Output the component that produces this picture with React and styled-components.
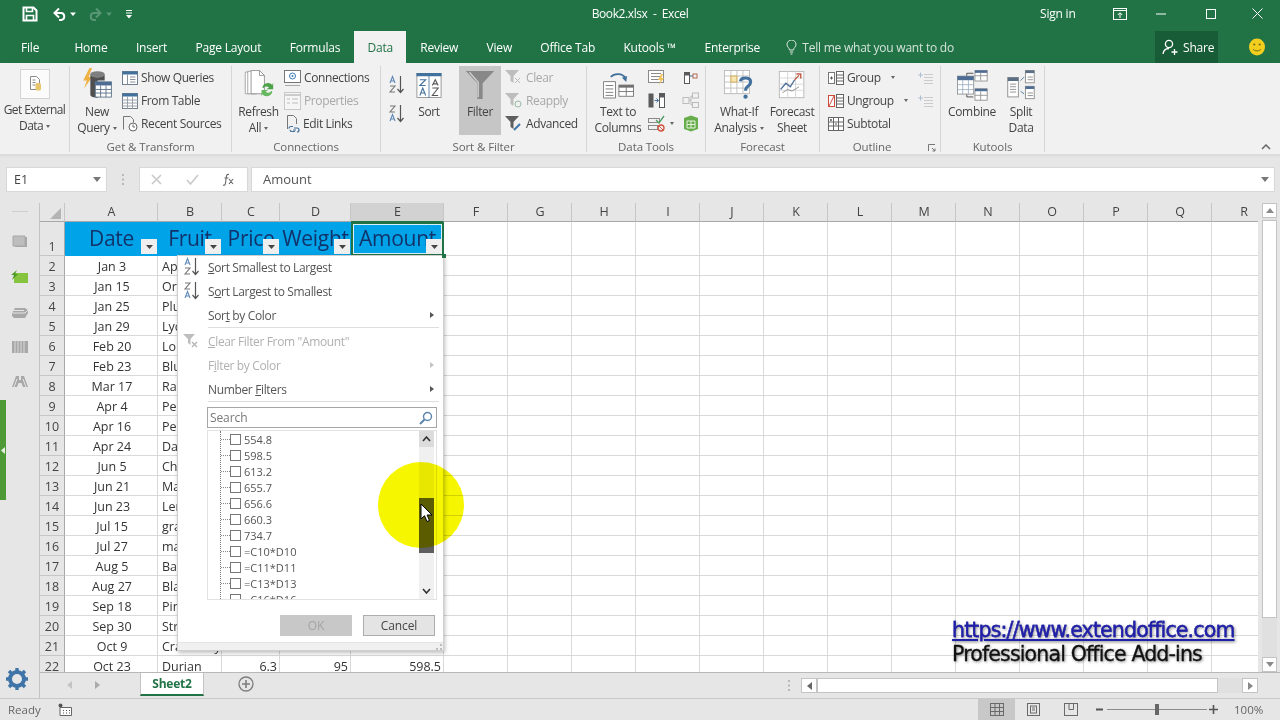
import React from 'react';
import styled, { createGlobalStyle } from 'styled-components';

const UI = `"Open Sans", "Noto Sans", sans-serif`;

const Global = createGlobalStyle`
  html, body { margin: 0; padding: 0; background: #e6e6e6; }
  * { box-sizing: border-box; }
`;

const Page = styled.div`
  width: 1280px;
  height: 720px;
  overflow: hidden;
  display: flex;
  flex-direction: column;
  font-family: ${UI};
  font-size: 12px;
  color: #444;
  background: #e6e6e6;
`;

/* title bar */
const TitleBar = styled.div`
  height: 31px;
  flex: none;
  background: #217346;
  color: #fff;
  display: flex;
  align-items: center;
  padding: 0 0 4px 22px;
`;
const Qat = styled.div`
  width: 560px;
  display: flex;
  align-items: center;
`;
const QatGap = styled.span`
  width: ${p => p.$w}px;
  flex: none;
`;
const DocName = styled.div`
  width: 138px;
  margin-left: -11px;
  text-align: center;
  letter-spacing: -0.4px;
  white-space: pre;
`;
const WinCtl = styled.div`
  margin-left: auto;
  display: flex;
  align-items: center;
`;
const SignIn = styled.span`
  width: 66px;
  letter-spacing: -0.2px;
`;
const WinBtn = styled.span`
  width: ${p => p.$w || 46}px;
  display: flex;
  justify-content: center;
`;

/* tabs */
const TabBar = styled.div`
  height: 32px;
  flex: none;
  background: #217346;
  display: flex;
  align-items: stretch;
  padding-left: 7px;
`;
const Tab = styled.div`
  padding: 0 ${p => p.$pad ?? 14.2}px;
  margin-right: ${p => p.$mr || 0}px;
  display: flex;
  align-items: center;
  letter-spacing: -0.2px;
  color: ${p => (p.$on ? '#217346' : '#fff')};
  background: ${p => (p.$on ? '#f1f1f1' : 'transparent')};
`;
const TellMe = styled.div`
  margin-left: 12px;
  display: flex;
  align-items: center;
  gap: 5px;
  color: #d4e4da;
  letter-spacing: -0.23px;
`;
const Share = styled.div`
  margin-left: auto;
  width: 63px;
  height: 32px;
  background: #185c37;
  color: #fff;
  display: flex;
  align-items: center;
  gap: 4px;
  padding-left: 7px;
  letter-spacing: -0.2px;
`;
const Smile = styled.div`
  width: 62px;
  padding-right: 15px;
  display: flex;
  align-items: center;
  justify-content: flex-end;
`;

/* ribbon */
const Ribbon = styled.div`
  height: 92px;
  flex: none;
  background: #f1f1f1;
  border-bottom: 1px solid #dcdcdc;
  box-shadow: 0 1px 2px rgba(0, 0, 0, 0.06);
  display: flex;
  padding-top: 3px;
  position: relative;
`;
const Group = styled.div`
  width: ${p => p.$w}px;
  height: 86px;
  flex: none;
  border-right: 1px solid #d6d6d6;
  display: flex;
  flex-direction: column;
`;
const GroupBody = styled.div`
  height: 73px;
  display: flex;
  padding-left: ${p => p.$pad || 0}px;
`;
const Caption = styled.div`
  height: 13px;
  line-height: 16px;
  text-align: center;
  color: #666;
  font-size: 11.5px;
  letter-spacing: -0.1px;
  position: relative;
  padding-right: ${p => p.$pr || 0}px;
`;
const Launcher = styled.span`
  position: absolute;
  right: 4px;
  top: 5px;
  display: flex;
`;
const Large = styled.div`
  width: ${p => p.$w}px;
  margin-left: ${p => p.$ml || 0}px;
  height: ${p => p.$h || 72}px;
  flex: none;
  display: flex;
  flex-direction: column;
  align-items: center;
  text-align: center;
  line-height: 16px;
  letter-spacing: ${p => p.$ls ?? -0.35}px;
  white-space: nowrap;
  background: ${p => (p.$on ? '#c6c6c6' : 'transparent')};
`;
const LargeIcon = styled.div`
  height: ${p => p.$h || 38}px;
  flex: none;
  display: flex;
  align-items: center;
  justify-content: center;
`;
const Stack = styled.div`
  margin-left: ${p => p.$ml || 0}px;
  width: ${p => p.$w || 'auto'};
  flex: none;
  display: flex;
  flex-direction: column;
`;
const SortStack = styled.div`
  width: 18px;
  flex: none;
  padding-top: 9px;
  display: flex;
  flex-direction: column;
  gap: 9px;
`;
const SmallBtn = styled.div`
  height: 23px;
  display: flex;
  align-items: center;
  gap: 3px;
  white-space: nowrap;
  letter-spacing: -0.38px;
  color: ${p => (p.$off ? '#a8a8a8' : '#444')};
`;
const Caret = styled.span`
  display: inline-block;
  width: 0;
  height: 0;
  margin-left: ${p => p.$ml ?? 3}px;
  vertical-align: middle;
  border-left: 2.5px solid transparent;
  border-right: 2.5px solid transparent;
  border-top: 3px solid #666;
`;
const Collapse = styled.span`
  position: absolute;
  right: 9px;
  bottom: 4px;
  display: flex;
`;

/* formula bar */
const FormulaRow = styled.div`
  height: 48px;
  flex: none;
  display: flex;
  align-items: flex-start;
  padding: 12px 5px 0 6px;
`;
const NameBox = styled.div`
  width: 101px;
  height: 25px;
  background: #fff;
  border: 1px solid #d8d8d8;
  display: flex;
  align-items: center;
  justify-content: space-between;
  padding: 0 5px 0 7px;
  font-size: 12.5px;
`;
const Dots = styled.div`
  width: 32px;
  height: 25px;
  display: flex;
  align-items: center;
  justify-content: center;
`;
const FxButtons = styled.div`
  width: 109px;
  height: 25px;
  background: #fff;
  border: 1px solid #d8d8d8;
  display: flex;
  align-items: center;
  justify-content: space-between;
  padding: 0 12px 0 11px;
`;
const FormulaInput = styled.div`
  flex: 1;
  margin-left: 3px;
  height: 25px;
  background: #fff;
  border: 1px solid #d8d8d8;
  display: flex;
  align-items: center;
  justify-content: space-between;
  padding: 0 5px 1px 11px;
  font-size: 13px;
  color: #555;
`;

/* main area */
const Main = styled.div`
  height: 495px;
  flex: none;
  display: flex;
  position: relative;
`;
const SidePane = styled.div`
  width: 40px;
  flex: none;
  border-right: 1px solid #c4c4c4;
  display: flex;
  flex-direction: column;
  align-items: center;
  padding-top: 8px;
  position: relative;
`;
const SideDash = styled.div`
  width: 16px;
  height: 1px;
  background: #cfcfcf;
  margin-bottom: 12px;
`;
const SideIcon = styled.div`
  height: 35px;
  display: flex;
  align-items: center;
`;
const GreenTab = styled.div`
  position: absolute;
  left: 0;
  top: 197px;
  width: 6px;
  height: 100px;
  background: #4e9a36;
  display: flex;
  align-items: center;
  justify-content: center;
`;
const Gear = styled.div`
  margin-top: auto;
  margin-bottom: 8px;
  margin-right: 5px;
  display: flex;
`;
const SheetArea = styled.div`
  flex: 1;
  display: flex;
  flex-direction: column;
  min-width: 0;
`;
const SheetTop = styled.div`
  height: 469px;
  flex: none;
  display: flex;
`;
const Grid = styled.div`
  width: 1218px;
  flex: none;
  overflow: hidden;
  background: #fff;
`;
const HeadRow = styled.div`
  display: flex;
  height: 19px;
  background: #e6e6e6;
`;
const Corner = styled.div`
  width: 25px;
  flex: none;
  display: flex;
  align-items: flex-end;
  justify-content: flex-end;
  padding: 0 3px 2px 0;
  border-right: 1px solid #c6c6c6;
  border-bottom: 1px solid #a8a8a8;
`;
const ColHead = styled.div`
  width: ${p => p.$w}px;
  flex: none;
  padding-left: 1px;
  text-align: center;
  line-height: 18px;
  font-size: 12.5px;
  color: #444;
  background: ${p => (p.$on ? '#d2d2d2' : 'transparent')};
  border-right: 1px solid #c6c6c6;
  border-bottom: 1px solid ${p => (p.$on ? '#217346' : '#a8a8a8')};
`;
const Row = styled.div`
  display: flex;
  height: ${p => p.$h || 20}px;
`;
const RowHead = styled.div`
  width: 25px;
  flex: none;
  display: flex;
  align-items: ${p => (p.$end ? 'flex-end' : 'center')};
  justify-content: center;
  padding-top: 2px;
  font-size: 12.5px;
  color: #444;
  background: #e6e6e6;
  border-right: 1px solid #a8a8a8;
  border-bottom: 1px solid #c6c6c6;
`;
const Cell = styled.div`
  width: ${p => p.$w}px;
  flex: none;
  padding: 0 2px 0 4px;
  line-height: 21px;
  font-size: 12.5px;
  color: #333;
  white-space: nowrap;
  overflow: hidden;
  text-align: ${p => p.$align || 'left'};
  border-right: 1px solid #d9d9d9;
  border-bottom: 1px solid #d9d9d9;
`;
const TitleCell = styled.div`
  width: ${p => p.$w}px;
  flex: none;
  position: relative;
  overflow: hidden;
  background: #00a2e8;
  color: #12336a;
  font-size: 21px;
  letter-spacing: -0.3px;
  line-height: ${p => (p.$on ? 28 : 32)}px;
  text-align: center;
  white-space: nowrap;
  border: ${p => (p.$on ? '2px solid #217346' : 'none')};
  box-shadow: ${p => (p.$on ? 'inset 0 0 0 1px #d8f0fa' : 'none')};
`;
const FilterBtn = styled.span`
  position: absolute;
  right: ${p => (p.$on ? 0 : 1)}px;
  bottom: ${p => (p.$on ? 0 : 2)}px;
  width: 16px;
  height: 15px;
  background: #efefef;
  display: flex;
  align-items: center;
  justify-content: center;
`;
const FillHandle = styled.span`
  position: absolute;
  left: 442px;
  top: 51px;
  width: 4px;
  height: 4px;
  background: #217346;
  z-index: 3;
`;

/* vertical scrollbar */
const VBar = styled.div`
  width: 15px;
  margin-left: 4px;
  flex: none;
  display: flex;
  flex-direction: column;
  background: #e0e0e0;
`;
const VArrow = styled.div`
  height: 15px;
  flex: none;
  background: #fff;
  border: 1px solid #c4c4c4;
  display: flex;
  align-items: center;
  justify-content: center;
`;
const VThumb = styled.div`
  height: 398px;
  flex: none;
  margin-top: 2px;
  background: #fff;
  border: 1px solid #c4c4c4;
`;
const VFill = styled.div`
  flex: 1;
`;

/* sheet tabs */
const TabsRow = styled.div`
  height: 26px;
  flex: none;
  display: flex;
  align-items: flex-start;
  border-top: 1px solid #b8b8b8;
  background: #e6e6e6;
  position: relative;
  z-index: 2;
`;
const SheetNav = styled.div`
  width: 100px;
  height: 24px;
  display: flex;
  align-items: center;
  padding-left: 27px;
  gap: 23px;
`;
const SheetTab = styled.div`
  width: 64px;
  height: 23px;
  background: #fff;
  border-bottom: 2px solid #217346;
  border-left: 1px solid #c4c4c4;
  border-right: 1px solid #c4c4c4;
  color: #217346;
  font-weight: 700;
  text-align: center;
  line-height: 22px;
  letter-spacing: -0.2px;
`;
const AddSheet = styled.div`
  margin-left: 34px;
  margin-top: 3px;
  display: flex;
`;
const TabGrip = styled.div`
  margin-left: auto;
  margin-right: 10px;
  margin-top: 7px;
  display: flex;
`;
const HBar = styled.div`
  width: 457px;
  height: 15px;
  margin-top: 5px;
  margin-right: 22px;
  flex: none;
  display: flex;
  background: #e0e0e0;
`;
const HArrow = styled.div`
  width: 16px;
  flex: none;
  background: #fff;
  border: 1px solid #c4c4c4;
  display: flex;
  align-items: center;
  justify-content: center;
  margin-left: ${p => (p.$end ? 'auto' : 0)};
`;
const HThumb = styled.div`
  width: 401px;
  background: #fff;
  border: 1px solid #c4c4c4;
`;

/* status bar */
const StatusBar = styled.div`
  height: 22px;
  flex: none;
  display: flex;
  align-items: center;
  border-top: 1px solid #c8c8c8;
  padding-left: 8px;
  color: #666;
  font-size: 11.5px;
`;
const MacroIcon = styled.span`
  margin-left: 17px;
  display: flex;
`;
const ViewGroup = styled.div`
  margin-left: auto;
  display: flex;
  align-items: center;
`;
const ViewBtn = styled.div`
  width: 37px;
  height: 21px;
  display: flex;
  align-items: center;
  justify-content: center;
  background: ${p => (p.$on ? '#c8c8c8' : 'transparent')};
`;
const Zoom = styled.div`
  display: flex;
  align-items: center;
  margin: 0 16px 0 7px;
`;
const ZoomTrack = styled.div`
  width: 100px;
  height: 1px;
  background: #8c8c8c;
  margin: 0 2px 0 4px;
  position: relative;
`;
const ZoomThumb = styled.span`
  position: absolute;
  left: 48px;
  top: -5px;
  width: 4px;
  height: 11px;
  background: #666;
`;
const ZoomValue = styled.div`
  width: 46px;
`;

/* filter dropdown */
const Dropdown = styled.div`
  position: absolute;
  left: 177px;
  top: 52px;
  width: 267px;
  height: 396px;
  z-index: 1;
  background: #fff;
  border: 1px solid #cfcfcf;
  box-shadow: 1px 2px 4px rgba(0, 0, 0, 0.25);
  display: flex;
  flex-direction: column;
`;
const MenuItem = styled.div`
  height: 24px;
  flex: none;
  display: flex;
  align-items: center;
  color: ${p => (p.$off ? '#b0b0b0' : '#555')};
  letter-spacing: -0.35px;
  padding-right: 9px;
  margin-top: ${p => p.$mt || 0}px;
`;
const MenuIcon = styled.span`
  width: 30px;
  flex: none;
  display: flex;
  justify-content: flex-start;
  padding-left: 5px;
`;
const MenuArrow = styled.span`
  margin-left: auto;
  width: 0;
  height: 0;
  border-top: 3.5px solid transparent;
  border-bottom: 3.5px solid transparent;
  border-left: 4px solid ${p => (p.$off ? '#c4c4c4' : '#555')};
`;
const MenuRule = styled.div`
  height: 1px;
  flex: none;
  margin: 0 4px 0 30px;
  background: #dedede;
`;
const SearchBox = styled.div`
  height: 21px;
  flex: none;
  margin: 5px 6px 0 29px;
  border: 1px solid #a6a6a6;
  display: flex;
  align-items: center;
  justify-content: space-between;
  padding: 0 3px 0 2px;
  color: #777;
  letter-spacing: -0.1px;
`;
const ListBox = styled.div`
  height: 170px;
  flex: none;
  margin: 2px 6px 0 29px;
  border: 1px solid #e2e2e2;
  display: flex;
  position: relative;
  overflow: hidden;
`;
const ListItems = styled.div`
  flex: 1;
  padding-left: 13px;
  position: relative;
`;
const TreeLine = styled.span`
  position: absolute;
  left: 12px;
  top: 0;
  bottom: 0;
  border-left: 1px dotted #777;
`;
const ListItem = styled.div`
  height: 16px;
  display: flex;
  align-items: center;
  font-size: 11px;
  color: #555;
  white-space: nowrap;
  &::before {
    content: '';
    width: 9px;
    border-top: 1px dotted #888;
    flex: none;
  }
`;
const Check = styled.span`
  width: 11px;
  height: 11px;
  flex: none;
  background: #fff;
  border: 1px solid #777;
  margin-right: 3px;
`;
const ListScroll = styled.div`
  width: 15px;
  margin-right: 2px;
  flex: none;
  background: #f0f0f0;
  display: flex;
  flex-direction: column;
  position: relative;
`;
const ListArrow = styled.div`
  height: 16px;
  flex: none;
  display: flex;
  align-items: center;
  justify-content: center;
  background: ${p => (p.$on ? '#dcdcdc' : 'transparent')};
  margin-top: ${p => (p.$end ? 'auto' : 0)};
`;
const ListThumb = styled.div`
  position: absolute;
  left: 0;
  top: 67px;
  width: 15px;
  height: 55px;
  background: #5e5e5e;
`;
const Buttons = styled.div`
  display: flex;
  justify-content: flex-end;
  gap: 11px;
  margin: 15px 8px 0 0;
`;
const DlgBtn = styled.div`
  width: 72px;
  height: 21px;
  text-align: center;
  line-height: 20px;
  letter-spacing: -0.1px;
  border: 1px solid ${p => (p.$off ? '#c8c8c8' : '#adadad')};
  background: ${p => (p.$off ? '#c8c8c8' : '#e4e4e4')};
  color: ${p => (p.$off ? '#a4a4a4' : '#444')};
`;
const GripBar = styled.div`
  margin-top: auto;
  height: 8px;
  background: #f0f0f0;
  border-top: 1px solid #e4e4e4;
  display: flex;
  justify-content: flex-end;
`;
const Spot = styled.div`
  position: absolute;
  left: 378px;
  top: 259px;
  width: 86px;
  height: 86px;
  border-radius: 50%;
  background: #f6f600;
  mix-blend-mode: multiply;
  z-index: 4;
`;
const Pointer = styled.span`
  position: absolute;
  left: 420px;
  top: 300px;
  z-index: 5;
  display: flex;
`;
const Watermark = styled.div`
  position: absolute;
  left: 952px;
  top: 415px;
  z-index: 3;
  font-family: "DejaVu Sans", sans-serif;
  font-size: 20.5px;
  line-height: 24px;
  letter-spacing: -0.85px;
  white-space: nowrap;
  color: #111;
  -webkit-text-stroke: 0.3px currentColor;
  text-shadow: 1px 1px 3px rgba(0, 0, 0, 0.55);
`;
const WatermarkLink = styled.div`
  color: #1f1fa8;
  text-decoration: underline;
`;

/* icons */
const Svg = ({ w, h = w, vb, children }) => (
  <svg width={w} height={h} viewBox={vb || `0 0 ${w} ${h}`} fill="none" style={{ display: 'block', flex: 'none' }}>
    {children}
  </svg>
);

const SaveIcon = () => (
  <Svg w={16}>
    <path d="M1.500 1.500h10l3 3v10h-13z" stroke="#fff" strokeWidth="2" />
    <path d="M4.500 1.500v4h6v-4M4.500 14.500v-5h7v5" stroke="#fff" strokeWidth="1.600" />
  </Svg>
);
const UndoIcon = () => (
  <Svg w={16}>
    <g stroke="#fff" strokeWidth="2">
      <path d="M3 7h6.500a3.600 3.600 0 0 1 0 7H7" />
      <path d="M7 2.500 2.500 7 7 11.500" />
    </g>
  </Svg>
);
const RedoIcon = () => (
  <Svg w={16}>
    <g stroke="#fff" strokeWidth="2" opacity=".25">
      <path d="M13 7H6.500a3.600 3.600 0 0 0 0 7H9" />
      <path d="M9 2.500 13.500 7 9 11.500" />
    </g>
  </Svg>
);
const TinyDown = ({ o = 1 }) => (
  <Svg w={6} h={4}>
    <path d="M0 .5h6L3 4z" fill="#fff" opacity={o} />
  </Svg>
);
const QatMore = () => (
  <Svg w={8} h={10}>
    <path d="M1 1.500h6M1 4h6" stroke="#fff" />
    <path d="M1 6h6L4 9.500z" fill="#fff" />
  </Svg>
);
const RibbonOpts = () => (
  <Svg w={14} h={12}>
    <rect x=".5" y=".5" width="13" height="11" stroke="#fff" />
    <path d="M.5 2.500h13M7 10V5M4.800 7 7 4.700 9.200 7" stroke="#fff" />
  </Svg>
);
const MinIcon = () => (
  <Svg w={10} h={2}>
    <path d="M0 1h10" stroke="#fff" />
  </Svg>
);
const MaxIcon = () => (
  <Svg w={10}>
    <rect x=".5" y=".5" width="9" height="9" stroke="#fff" />
  </Svg>
);
const CloseIcon = () => (
  <Svg w={11}>
    <path d="M.5.5l10 10M10.500.5l-10 10" stroke="#fff" />
  </Svg>
);
const Bulb = () => (
  <Svg w={11} h={15}>
    <path d="M3.500 10c0-2-2.500-3-2.500-5.500a4.500 4.500 0 0 1 9 0C10 7 7.500 8 7.500 10zM3.800 12h3.400M4.500 14h2" stroke="#dfeae3" />
  </Svg>
);
const ShareIcon = () => (
  <Svg w={17}>
    <circle cx="7" cy="5" r="3.600" stroke="#fff" strokeWidth="1.300" />
    <path d="M1 15c.5-4 3-5.500 6-5.500M12.500 10v6M9.500 13h6" stroke="#fff" strokeWidth="1.300" />
  </Svg>
);
const SmileIcon = () => (
  <Svg w={16} h={18}>
    <ellipse cx="8" cy="9" rx="8" ry="8.500" fill="#f2cf1e" />
    <circle cx="5.300" cy="6.500" r="1.100" fill="#7a6a10" />
    <circle cx="10.700" cy="6.500" r="1.100" fill="#7a6a10" />
    <path d="M4 11c1.500 2.500 6.500 2.500 8 0" stroke="#7a6a10" />
  </Svg>
);

const ExternalIcon = () => (
  <Svg w={30} h={30}>
    <rect x=".5" y=".5" width="29" height="29" fill="#fbfbfb" stroke="#d4d4d4" />
    <path d="M10.500 7.500h6l3 3v10h-9z" stroke="#8a8a8a" fill="#fff" />
    <path d="M12.500 11h3M12.500 13.500h3M12.500 16h3" stroke="#8a8a8a" />
    <rect x="15.500" y="14" width="5.500" height="7.500" rx="1.500" fill="#e8c670" />
  </Svg>
);
const QueryIcon = () => (
  <Svg w={31} h={34} vb="0 0 34 38">
    <path d="M8 0 1 14h4l-3 9 9-13H7l4-10z" fill="#efb144" />
    <ellipse cx="17" cy="7" rx="8" ry="3.500" fill="#7f7f7f" />
    <path d="M9 7v23c0 2 4 3.500 8 3.500V14h8V7c0 2-4 3.500-8 3.500S9 9 9 7z" fill="#505050" />
    <rect x="14.500" y="15.500" width="18" height="17" fill="#fff" stroke="#5a6f86" />
    <path d="M14.500 15.500h18v4h-18z" fill="#4d6c93" />
    <path d="M14.500 24h18M14.500 28h18M20.500 19.500v13M26.500 19.500v13" stroke="#5a6f86" />
  </Svg>
);
const ShowQueriesIcon = () => (
  <Svg w={16}>
    <rect x=".5" y="1.500" width="15" height="13" fill="#fff" stroke="#6f7f90" />
    <path d="M.5 1.500h15v3H.5z" fill="#41719c" />
    <path d="M5.500 4.500v10M8 7h5.500M8 9.500h5.500M8 12h5.500" stroke="#8a9099" />
  </Svg>
);
const FromTableIcon = () => (
  <Svg w={16} h={17}>
    <rect x=".5" y="1.500" width="15" height="15" fill="#fff" stroke="#75808c" />
    <path d="M.5 1.500h15v3H.5z" fill="#41719c" />
    <path d="M5.500 4.500v12M10.500 4.500v12M.5 8h15M.5 11h15M.5 14h15" stroke="#9aa2aa" />
  </Svg>
);
const RecentIcon = () => (
  <Svg w={16} h={17}>
    <path d="M1.500 14.500V1.500h7l3 3v3" stroke="#777" />
    <circle cx="11" cy="12" r="4" fill="#fff" stroke="#666" />
    <path d="M11 9.500V12h2" stroke="#666" />
  </Svg>
);
const RefreshIcon = () => (
  <Svg w={30} h={30} vb="0 0 36 36">
    <path d="M1.500 2.500h12v26h-12z" fill="#fff" stroke="#999" />
    <path d="M4.500 1.500h11v27h-11z" fill="#fff" stroke="#999" />
    <path d="M8.500.5h10l6 6v22h-16z" fill="#fff" stroke="#888" />
    <path d="M18.500.5v6h6" stroke="#888" />
    <path d="M22 21a7 7 0 0 1 12-3l1-3v8h-8l3-2a4.500 4.500 0 0 0-7 1z" fill="#4ea24a" />
    <path d="M34 26a7 7 0 0 1-12 3l-1 3v-8h8l-3 2a4.500 4.500 0 0 0 7-1z" fill="#66b85f" />
  </Svg>
);
const ConnIcon = () => (
  <Svg w={17} h={16}>
    <rect x=".5" y=".5" width="16" height="12" fill="#fff" stroke="#777" />
    <circle cx="8.500" cy="6" r="3" stroke="#3d7ab5" />
    <circle cx="8.500" cy="6" r="1" fill="#3d7ab5" />
    <path d="M1 15.500h15" stroke="#aaa" />
  </Svg>
);
const PropsIcon = () => (
  <Svg w={17} h={18}>
    <rect x=".5" y=".5" width="16" height="17" fill="#f6f6f6" stroke="#c8c8c8" />
    <path d="M.5 3h16" stroke="#ccc" strokeWidth="2" />
    <path d="M3 7h3M3 11h3M8 7h6M8 11h6" stroke="#bcbcbc" />
  </Svg>
);
const EditLinksIcon = () => (
  <Svg w={16} h={18}>
    <path d="M3.500 14V.5h6l3 3V9" stroke="#777" />
    <path d="M5 13.500a2 2 0 0 1 2-2h2M11 16.500H8a2 2 0 0 1-2-1.500M10 13h3a2 2 0 0 1 0 4M9 15h3" stroke="#41719c" strokeWidth="1.200" />
  </Svg>
);
const AzIcon = ({ flip }) => (
  <Svg w={17} h={20}>
    <g fill="none" strokeWidth="1.100">
      {flip ? (
        <path d="M2 2h5L2 8h5" stroke="#777" />
      ) : (
        <path d="M2 8l2.500-6.500L7 8M3 6h3" stroke="#5f88b8" />
      )}
      {flip ? (
        <path d="M2 17l2.500-6.500L7 17M3 15h3" stroke="#5f88b8" />
      ) : (
        <path d="M2 11h5l-5 6h5" stroke="#777" />
      )}
    </g>
    <path d="M12.500 1v16M9.500 14l3 3.500 3-3.500" stroke="#555" strokeWidth="1.200" />
  </Svg>
);
const SortIcon = () => (
  <Svg w={30} h={25} vb="0 0 30 30">
    <rect x=".5" y=".5" width="29" height="29" fill="#fff" stroke="#8a8a8a" />
    <path d="M0 0h30v4H0zM14.500 4h1v26h-1z" fill="#41719c" />
    <path d="M4 8h7L4 15h7M4 27l3.500-9 3.500 9M5 24h5" stroke="#41719c" strokeWidth="1.300" />
    <path d="M19 15l3.500-7 3.500 7M20 13h5M19 18h7l-7 9h7" stroke="#555" strokeWidth="1.300" />
  </Svg>
);
const FunnelBig = () => (
  <Svg w={32} h={30} vb="0 0 34 34">
    <path d="M1 1h32L20 15v18h-6V15z" fill="#888" />
    <path d="M5 2.500 15 14v17" stroke="#cfcfcf" strokeWidth="1.500" />
  </Svg>
);
const SmallFunnel = ({ color = '#bdbdbd', children }) => (
  <Svg w={18}>
    <path d="M0 1h14L8.500 7v7l-3-2V7z" fill={color} />
    {children}
  </Svg>
);
const TextColumnsIcon = () => (
  <Svg w={31} h={31} vb="0 0 36 36">
    <path d="M9 8a10 8 0 0 1 17 1" stroke="#41719c" strokeWidth="2" />
    <path d="M27 14l-5-5 6-2z" fill="#41719c" />
    <path d="M.5 13.500h14v19H.5z" fill="#fff" stroke="#6f6f6f" />
    <path d="M3 18h9M3 22h9M3 26h9M3 29.500h9" stroke="#6f6f6f" />
    <rect x="18.500" y="17.500" width="17" height="13" fill="#fff" stroke="#6f6f6f" />
    <path d="M18.500 17.500h17v3h-17z" fill="#6f6f6f" />
    <path d="M27 20v10M18.500 25h17" stroke="#6f6f6f" />
  </Svg>
);
const FlashFill = () => (
  <Svg w={18}>
    <rect x=".5" y="1.500" width="15" height="12" fill="#fff" stroke="#8a8a8a" />
    <path d="M3 4.500h10M3 7.500h10M3 10.500h10" stroke="#8a8a8a" />
    <path d="M13 5l-3 6h2.500L11 16l5-7h-2.500L15 5z" fill="#efc45c" />
  </Svg>
);
const RemoveDup = () => (
  <Svg w={18}>
    <rect x=".5" y="1.500" width="5" height="14" fill="#5a5a5a" />
    <rect x="11.500" y="1.500" width="5" height="14" fill="#fff" stroke="#5a5a5a" />
    <path d="M11.500 1.500h5v4h-5z" fill="#5a5a5a" />
    <path d="M6.500 8.500h4M8.500 6.500l2 2-2 2" stroke="#41719c" />
  </Svg>
);
const Validation = () => (
  <Svg w={18}>
    <rect x=".5" y="3.500" width="11" height="4" stroke="#8a8a8a" />
    <rect x=".5" y="10.500" width="9" height="4" stroke="#8a8a8a" />
    <path d="M8 5l3 3 5-7" stroke="#4f9a5f" strokeWidth="1.300" />
    <circle cx="13" cy="13" r="3" stroke="#d0533e" strokeWidth="1.300" />
    <path d="M11 11l4 4" stroke="#d0533e" />
  </Svg>
);
const Consolidate = () => (
  <Svg w={18}>
    <rect x="2.500" y="3.500" width="5" height="11" fill="#fff" stroke="#5a5a5a" />
    <path d="M2.500 3.500h5v3h-5z" fill="#5a5a5a" />
    <rect x="11" y="5" width="4" height="4" stroke="#b46a50" />
    <path d="M8 7h3" stroke="#41719c" />
  </Svg>
);
const Relations = () => (
  <Svg w={18}>
    <rect x="1" y="5.500" width="6" height="6" stroke="#bbb" />
    <rect x="10.500" y="1" width="6" height="5" stroke="#bbb" />
    <rect x="10.500" y="10.500" width="6" height="5" stroke="#bbb" />
    <path d="M7 8h2V4h1M9 8v5h1" stroke="#bbb" />
  </Svg>
);
const DataModel = () => (
  <Svg w={18}>
    <path d="M9 .5l7 2.500v11l-7 2.500-7-2.500V3z" fill="#68ad4c" />
    <path d="M5 6h8v7H5zM9 6v7M5 9.500h8" stroke="#e4f2dc" />
  </Svg>
);
const WhatIfIcon = () => (
  <Svg w={31} h={31} vb="0 0 36 36">
    <rect x=".5" y=".5" width="29" height="27" fill="#fff" stroke="#b5b5b5" />
    <path d="M.5 7h29M.5 14h29M.5 21h29M8 .5v27M15 .5v27M22 .5v27" stroke="#bcbcbc" />
    <path d="M8 7h7v7H8z" fill="#f6e7b4" stroke="#d2a642" />
    <path d="M19 13c1-5 12-5 12 1 0 5-6 4-6 10" stroke="#41719c" strokeWidth="3.500" />
    <circle cx="25" cy="31" r="2.500" fill="#41719c" />
  </Svg>
);
const ForecastIcon = () => (
  <Svg w={28} h={28} vb="0 0 30 32">
    <rect x=".5" y=".5" width="28" height="30" fill="#fff" stroke="#b5b5b5" />
    <path d="M.5 8h28M.5 15h28M.5 22h28M10 .5v30M19 .5v30" stroke="#d4d4d4" />
    <path d="M2 21l6-7 5 4 5-8" stroke="#4c7099" strokeWidth="1.600" />
    <path d="M18 10l5-5M20 3.500h5v5" stroke="#c05a44" strokeWidth="1.600" />
    <path d="M4 25l6-4 5 2 8-5" stroke="#888" />
  </Svg>
);
const GroupIcon = ({ red }) => (
  <Svg w={16}>
    <rect x=".5" y="2.500" width="6" height="11" stroke={red ? '#cc4c3c' : '#777'} fill="#fff" />
    <path d={red ? 'M1 13l5-10' : 'M2 8h3M3.500 6.500v3'} stroke={red ? '#cc4c3c' : '#555'} />
    <rect x="8.500" y="1.500" width="7" height="13" fill="#fff" stroke="#666" />
    <path d="M8.500 5h7M8.500 8h7M8.500 11h7" stroke="#666" />
  </Svg>
);
const SubtotalIcon = () => (
  <Svg w={16}>
    <rect x=".5" y="1.500" width="15" height="13" fill="#fff" stroke="#666" />
    <path d="M.5 6h15M.5 10h15M5.500 1.500v13M10.500 1.500v13" stroke="#666" />
    <path d="M2 4h2M2.900 3v2M7 8h2" stroke="#555" />
  </Svg>
);
const OutlineMini = () => (
  <Svg w={16}>
    <path d="M6 4.500h9M6 7.500h9M6 10.500h9M6 13.500h9" stroke="#cbcbcb" />
    <path d="M0 5h5M2.500 2.500v5" stroke="#aebfd1" />
  </Svg>
);
const LauncherIcon = () => (
  <Svg w={8}>
    <path d="M.5 7V.5H7M4 4l3 3M7 4.500V7H4.500" stroke="#777" />
  </Svg>
);
const CombineIcon = () => (
  <Svg w={31} h={31} vb="0 0 38 38">
    <rect x=".5" y="7.500" width="20" height="22" fill="#fff" stroke="#888" />
    <path d="M.5 7.500h20v5H.5z" fill="#4d6c93" />
    <path d="M.5 18h20M.5 24h20M7 12v18M14 12v18" stroke="#9ab" />
    <rect x="22" y=".5" width="15" height="13" fill="#fff" stroke="#888" />
    <path d="M22 .5h15v3H22z" fill="#4d6c93" />
    <path d="M22 7h15M29 3v10" stroke="#888" />
    <rect x="22" y="23" width="15" height="14" fill="#fff" stroke="#888" />
    <path d="M22 23h15v3H22z" fill="#4d6c93" />
    <path d="M22 31h15M29 26v11" stroke="#888" />
    <path d="M20 4h-8v3M20 33h-8v-3" stroke="#333" />
  </Svg>
);
const SplitIcon = () => (
  <Svg w={30} h={30} vb="0 0 31 34">
    <rect x=".5" y="8.500" width="12" height="22" fill="#fff" stroke="#888" />
    <path d="M.5 8.500h12v4H.5z" fill="#5a6f86" />
    <path d="M3 16h7M3 19h7M3 22h7M3 25h7" stroke="#888" />
    <rect x="20.500" y=".5" width="10" height="14" fill="#fff" stroke="#888" />
    <path d="M20.500.5h10v3h-10z" fill="#5a6f86" />
    <rect x="20.500" y="18.500" width="10" height="14" fill="#fff" stroke="#888" />
    <path d="M20.500 18.500h10v3h-10z" fill="#4d6c93" />
    <path d="M23 8h6M23 11h6M23 26h6M23 29h6" stroke="#888" />
    <path d="M15 12l4-4M15 24l4 3" stroke="#41719c" />
  </Svg>
);
const CollapseIcon = () => (
  <Svg w={10} h={6}>
    <path d="M1 5l4-4 4 4" stroke="#666" strokeWidth="1.500" />
  </Svg>
);
const FormDown = () => (
  <Svg w={8} h={5}>
    <path d="M0 0h8L4 5z" fill="#777" />
  </Svg>
);
const VDots = () => (
  <Svg w={3} h={11}>
    <path d="M0 0h2v2H0zM0 4.500h2v2H0zM0 9h2v2H0z" fill="#b8b8b8" />
  </Svg>
);
const XIcon = () => (
  <Svg w={11}>
    <path d="M1 1l9 9M10 1l-9 9" stroke="#c9c9c9" strokeWidth="1.600" />
  </Svg>
);
const TickIcon = () => (
  <Svg w={13} h={11}>
    <path d="M1 6l3.500 4L12 1" stroke="#c9c9c9" strokeWidth="1.600" />
  </Svg>
);
const FxIcon = () => (
  <Svg w={13}>
    <path d="M7 1.500C5 1 4.500 2 4.300 4L3.500 10C3.300 12 2.500 12.500 1 12M2.500 5h4M7 6l4 5M11 6l-4 5" stroke="#666" strokeWidth="1.100" />
  </Svg>
);
const CornerTri = () => (
  <Svg w={11}>
    <path d="M11 0v11H0z" fill="#b4b4b4" />
  </Svg>
);
const FilterCaret = () => (
  <Svg w={7} h={4}>
    <path d="M0 0h7L3.500 4z" fill="#444" />
  </Svg>
);
const SideTabs = () => (
  <Svg w={16} h={14}>
    <path d="M3 2h12v10H3z" fill="#a8a8a8" />
    <path d="M1 1h12v10H1z" fill="#bdbdbd" stroke="#a8a8a8" />
  </Svg>
);
const SideGreen = () => (
  <Svg w={17} h={14}>
    <path d="M3 3h14v10H3z" fill="#86c440" />
    <path d="M6 0 0 5h3l-2 5 6-6H4z" fill="#4d9a2a" />
  </Svg>
);
const SideStack = () => (
  <Svg w={17} h={14}>
    <path d="M1 8l3-5h10l3 2v3l-3 5H3l-2-2z" fill="#a8a8a8" />
    <path d="M1 8h13l3-3M1 5.500h12" stroke="#e6e6e6" />
  </Svg>
);
const SideCols = () => (
  <Svg w={16} h={12}>
    <rect width="16" height="12" fill="#a8a8a8" />
    <path d="M3 0v12M6 0v12M9 0v12M12 0v12" stroke="#d8d8d8" />
  </Svg>
);
const SideBinoc = () => (
  <Svg w={16} h={14}>
    <path d="M4 1h3v4h2V1h3l4 11h-5L9.500 8h-3L5 12H0z" fill="#a8a8a8" />
    <path d="M2 12l3-8M14 12l-3-8" stroke="#e6e6e6" />
  </Svg>
);
const GearIcon = () => (
  <Svg w={22}>
    <circle cx="11" cy="11" r="7" stroke="#3f74a8" strokeWidth="4" />
    <path d="M11 0v4M11 18v4M0 11h4M18 11h4M3 3l3 3M16 16l3 3M19 3l-3 3M6 16l-3 3" stroke="#3f74a8" strokeWidth="3.400" />
  </Svg>
);
const NavLeft = ({ c = '#c4c4c4' }) => (
  <Svg w={5} h={8}>
    <path d="M5 0v8L0 4z" fill={c} />
  </Svg>
);
const NavRight = ({ c = '#c4c4c4' }) => (
  <Svg w={5} h={8}>
    <path d="M0 0v8l5-4z" fill={c} />
  </Svg>
);
const AddIcon = () => (
  <Svg w={16}>
    <circle cx="8" cy="8" r="7" stroke="#7d7d7d" strokeWidth="1.300" />
    <path d="M8 4v8M4 8h8" stroke="#7d7d7d" strokeWidth="1.600" />
  </Svg>
);
const ArrowUp = () => (
  <Svg w={8} h={5}>
    <path d="M4 0l4 5H0z" fill="#8a8a8a" />
  </Svg>
);
const ArrowDown = () => (
  <Svg w={8} h={5}>
    <path d="M0 0h8L4 5z" fill="#8a8a8a" />
  </Svg>
);
const MacroBtn = () => (
  <Svg w={14} h={13}>
    <circle cx="2.500" cy="2.500" r="2" fill="#555" />
    <path d="M2 4.500h11.500v8H2z" fill="#fff" stroke="#666" />
    <path d="M5 7.500h1M8 7.500h1M11 7.500h1M5 10h1M8 10h1M11 10h1" stroke="#555" />
  </Svg>
);
const NormalView = () => (
  <Svg w={14} h={13}>
    <rect x=".5" y=".5" width="13" height="12" stroke="#6a6a6a" />
    <path d="M.5 4.500h13M.5 8.500h13M5 .5v12M9.500 .5v12" stroke="#6a6a6a" />
  </Svg>
);
const LayoutView = () => (
  <Svg w={13}>
    <rect x=".5" y=".5" width="12" height="12" stroke="#6a6a6a" />
    <rect x="3.500" y="3" width="6" height="7" stroke="#6a6a6a" />
    <path d="M5 5h3M5 7h3" stroke="#6a6a6a" />
  </Svg>
);
const BreakView = () => (
  <Svg w={14} h={13}>
    <rect x=".5" y=".5" width="13" height="12" stroke="#6a6a6a" />
    <path d="M5 .5v6h4.500v-6" stroke="#6a6a6a" />
  </Svg>
);
const Minus = () => (
  <Svg w={7} h={3}>
    <path d="M0 1.500h7" stroke="#555" strokeWidth="2" />
  </Svg>
);
const Plus = () => (
  <Svg w={9}>
    <path d="M0 4.500h9M4.500 0v9" stroke="#555" strokeWidth="1.600" />
  </Svg>
);
const Magnifier = () => (
  <Svg w={14}>
    <circle cx="8.500" cy="5.500" r="4" stroke="#5c84ad" strokeWidth="1.400" />
    <path d="M5.500 8.500 1 13" stroke="#5c84ad" strokeWidth="2" />
  </Svg>
);
const Chevron = ({ up }) => (
  <Svg w={9} h={6}>
    <path d={up ? 'M1 5l3.500-4L8 5' : 'M1 1l3.500 4L8 1'} stroke="#333" strokeWidth="1.600" />
  </Svg>
);
const ClearMenuIcon = () => (
  <Svg w={16}>
    <path d="M0 1h12L7.500 6v6L5 10V6z" fill="#bdbdbd" />
    <path d="M9 9l5 5M14 9l-5 5" stroke="#b4b4b4" strokeWidth="1.300" />
  </Svg>
);
const CursorIcon = () => (
  <Svg w={13} h={20}>
    <path d="M1 1v15l3.500-3.300L7 18.500l2.500-1-2.400-5.500H12z" fill="#fff" stroke="#000" />
  </Svg>
);
const Grip = () => (
  <Svg w={8} h={8}>
    <path d="M5 1h2v2H5zM1 5h2v2H1zM5 5h2v2H5z" fill="#bdbdbd" />
  </Svg>
);
const PaneArrow = () => (
  <Svg w={4} h={7}>
    <path d="M4 0v7L0 3.500z" fill="#e8f2e2" />
  </Svg>
);

/* data */
const COLS = [
  ['A', 93], ['B', 64], ['C', 58], ['D', 71], ['E', 93], ['F', 64], ['G', 64], ['H', 64], ['I', 64],
  ['J', 64], ['K', 64], ['L', 64], ['M', 64], ['N', 64], ['O', 64], ['P', 64], ['Q', 64], ['R', 64],
];
const TITLES = ['Date', 'Fruit', 'Price', 'Weight', 'Amount'];
const ROWS = [
  ['Jan 3', 'Apple'], ['Jan 15', 'Orange'], ['Jan 25', 'Plum'], ['Jan 29', 'Lychee'], ['Feb 20', 'Longan'],
  ['Feb 23', 'Blueberry'], ['Mar 17', 'Raspberry'], ['Apr 4', 'Peach'], ['Apr 16', 'Pear'], ['Apr 24', 'Date'],
  ['Jun 5', 'Cherry'], ['Jun 21', 'Mango'], ['Jun 23', 'Lemon'], ['Jul 15', 'grape'], ['Jul 27', 'mango'],
  ['Aug 5', 'Banana'], ['Aug 27', 'Blackberry'], ['Sep 18', 'Pineapple'], ['Sep 30', 'Strawberry'],
  ['Oct 9', 'Cranberry'], ['Oct 23', 'Durian', '6.3', '95', '598.5'],
];
const VALUES = ['554.8', '598.5', '613.2', '655.7', '656.6', '660.3', '734.7', '=C10*D10', '=C11*D11', '=C13*D13', '=C16*D16'];

const TitleRibbon = () => (
  <TitleBar>
    <Qat>
      <SaveIcon />
      <QatGap $w={14} />
      <UndoIcon />
      <QatGap $w={2} />
      <TinyDown />
      <QatGap $w={11} />
      <RedoIcon />
      <QatGap $w={3} />
      <TinyDown o={0.25} />
      <QatGap $w={13} />
      <QatMore />
    </Qat>
    <DocName>Book2.xlsx  -  Excel</DocName>
    <WinCtl>
      <SignIn>Sign in</SignIn>
      <WinBtn $w={28}><RibbonOpts /></WinBtn>
      <WinBtn $w={54}><MinIcon /></WinBtn>
      <WinBtn $w={46}><MaxIcon /></WinBtn>
      <WinBtn $w={46}><CloseIcon /></WinBtn>
    </WinCtl>
  </TitleBar>
);

const Tabs = () => (
  <TabBar>
    <Tab $pad={14} $mr={7}>File</Tab>
    <Tab>Home</Tab>
    <Tab>Insert</Tab>
    <Tab>Page Layout</Tab>
    <Tab>Formulas</Tab>
    <Tab $on $pad={13}>Data</Tab>
    <Tab>Review</Tab>
    <Tab>View</Tab>
    <Tab>Office Tab</Tab>
    <Tab>Kutools ™</Tab>
    <Tab>Enterprise</Tab>
    <TellMe><Bulb />Tell me what you want to do</TellMe>
    <Share><ShareIcon />Share</Share>
    <Smile><SmileIcon /></Smile>
  </TabBar>
);

const RibbonPanel = () => (
  <Ribbon>
    <Group $w={70}>
      <GroupBody>
        <Large $w={69} $ls={-0.6}>
          <LargeIcon $h={36}><ExternalIcon /></LargeIcon>
          <div>Get External</div>
          <div>Data<Caret /></div>
        </Large>
      </GroupBody>
      <Caption />
    </Group>
    <Group $w={162}>
      <GroupBody $pad={6}>
        <Large $w={42}>
          <LargeIcon><QueryIcon /></LargeIcon>
          <div>New</div>
          <div>Query<Caret /></div>
        </Large>
        <Stack $ml={4}>
          <SmallBtn><ShowQueriesIcon />Show Queries</SmallBtn>
          <SmallBtn><FromTableIcon />From Table</SmallBtn>
          <SmallBtn><RecentIcon />Recent Sources</SmallBtn>
        </Stack>
      </GroupBody>
      <Caption>Get &amp; Transform</Caption>
    </Group>
    <Group $w={149}>
      <GroupBody $pad={6}>
        <Large $w={41}>
          <LargeIcon><RefreshIcon /></LargeIcon>
          <div>Refresh</div>
          <div>All<Caret /></div>
        </Large>
        <Stack $ml={5}>
          <SmallBtn><ConnIcon />Connections</SmallBtn>
          <SmallBtn $off><PropsIcon />Properties</SmallBtn>
          <SmallBtn><EditLinksIcon />Edit Links</SmallBtn>
        </Stack>
      </GroupBody>
      <Caption>Connections</Caption>
    </Group>
    <Group $w={206}>
      <GroupBody $pad={7}>
        <SortStack>
          <AzIcon />
          <AzIcon flip />
        </SortStack>
        <Large $w={36} $ml={5}>
          <LargeIcon><SortIcon /></LargeIcon>
          <div>Sort</div>
        </Large>
        <Large $w={42} $ml={12} $h={69} $on>
          <LargeIcon><FunnelBig /></LargeIcon>
          <div>Filter</div>
        </Large>
        <Stack $ml={4}>
          <SmallBtn $off><SmallFunnel><path d="M10 9l5 5M15 9l-5 5" stroke="#bbb" /></SmallFunnel>Clear</SmallBtn>
          <SmallBtn $off><SmallFunnel><circle cx="13" cy="12" r="3" stroke="#9ab9a0" /></SmallFunnel>Reapply</SmallBtn>
          <SmallBtn><SmallFunnel color="#5f5f5f"><path d="M9 15l6-6" stroke="#3f74a8" strokeWidth="2" /></SmallFunnel>Advanced</SmallBtn>
        </Stack>
      </GroupBody>
      <Caption>Sort &amp; Filter</Caption>
    </Group>
    <Group $w={119}>
      <GroupBody $pad={7}>
        <Large $w={48}>
          <LargeIcon><TextColumnsIcon /></LargeIcon>
          <div>Text to</div>
          <div>Columns</div>
        </Large>
        <Stack $ml={6} $w="34px">
          <SmallBtn><FlashFill /></SmallBtn>
          <SmallBtn><RemoveDup /></SmallBtn>
          <SmallBtn><Validation /><Caret $ml={1} /></SmallBtn>
        </Stack>
        <Stack>
          <SmallBtn><Consolidate /></SmallBtn>
          <SmallBtn><Relations /></SmallBtn>
          <SmallBtn><DataModel /></SmallBtn>
        </Stack>
      </GroupBody>
      <Caption>Data Tools</Caption>
    </Group>
    <Group $w={114}>
      <GroupBody $pad={6}>
        <Large $w={54}>
          <LargeIcon><WhatIfIcon /></LargeIcon>
          <div>What-If</div>
          <div>Analysis<Caret /></div>
        </Large>
        <Large $w={46} $ml={3}>
          <LargeIcon><ForecastIcon /></LargeIcon>
          <div>Forecast</div>
          <div>Sheet</div>
        </Large>
      </GroupBody>
      <Caption>Forecast</Caption>
    </Group>
    <Group $w={121}>
      <GroupBody $pad={8}>
        <Stack $w="90px">
          <SmallBtn><GroupIcon />Group<Caret $ml={7} /></SmallBtn>
          <SmallBtn><GroupIcon red />Ungroup<Caret $ml={7} /></SmallBtn>
          <SmallBtn><SubtotalIcon />Subtotal</SmallBtn>
        </Stack>
        <Stack>
          <SmallBtn><OutlineMini /></SmallBtn>
          <SmallBtn><OutlineMini /></SmallBtn>
        </Stack>
      </GroupBody>
      <Caption $pr={16}>Outline<Launcher><LauncherIcon /></Launcher></Caption>
    </Group>
    <Group $w={104}>
      <GroupBody $pad={5}>
        <Large $w={52}>
          <LargeIcon><CombineIcon /></LargeIcon>
          <div>Combine</div>
        </Large>
        <Large $w={36} $ml={5}>
          <LargeIcon><SplitIcon /></LargeIcon>
          <div>Split</div>
          <div>Data</div>
        </Large>
      </GroupBody>
      <Caption>Kutools</Caption>
    </Group>
    <Collapse><CollapseIcon /></Collapse>
  </Ribbon>
);

const FilterMenu = () => (
  <Dropdown>
    <MenuItem $mt={-1}><MenuIcon><AzIcon /></MenuIcon><span><u>S</u>ort Smallest to Largest</span></MenuItem>
    <MenuItem><MenuIcon><AzIcon flip /></MenuIcon><span>S<u>o</u>rt Largest to Smallest</span></MenuItem>
    <MenuItem><MenuIcon /><span>Sor<u>t</u> by Color</span><MenuArrow /></MenuItem>
    <MenuRule />
    <MenuItem $mt={1} $off><MenuIcon><ClearMenuIcon /></MenuIcon><span><u>C</u>lear Filter From "Amount"</span></MenuItem>
    <MenuItem $off><MenuIcon /><span>F<u>i</u>lter by Color</span><MenuArrow $off /></MenuItem>
    <MenuItem><MenuIcon /><span>Number <u>F</u>ilters</span><MenuArrow /></MenuItem>
    <MenuRule />
    <SearchBox>Search<Magnifier /></SearchBox>
    <ListBox>
      <ListItems>
        <TreeLine />
        {VALUES.map(v => (
          <ListItem key={v}><Check />{v}</ListItem>
        ))}
      </ListItems>
      <ListScroll>
        <ListArrow $on><Chevron up /></ListArrow>
        <ListThumb />
        <ListArrow $end><Chevron /></ListArrow>
      </ListScroll>
    </ListBox>
    <Buttons>
      <DlgBtn $off>OK</DlgBtn>
      <DlgBtn>Cancel</DlgBtn>
    </Buttons>
    <GripBar><Grip /></GripBar>
  </Dropdown>
);

const Sheet = () => (
  <Grid>
    <HeadRow>
      <Corner><CornerTri /></Corner>
      {COLS.map(([c, w]) => (
        <ColHead key={c} $w={w} $on={c === 'E'}>{c}</ColHead>
      ))}
    </HeadRow>
    <Row $h={34}>
      <RowHead $end>1</RowHead>
      {TITLES.map((t, i) => (
        <TitleCell key={t} $w={COLS[i][1]} $on={t === 'Amount'}>
          {t}
          <FilterBtn $on={t === 'Amount'}><FilterCaret /></FilterBtn>
        </TitleCell>
      ))}
      {COLS.slice(5).map(([c, w]) => <Cell key={c} $w={w} />)}
    </Row>
    {ROWS.map((r, i) => (
      <Row key={r[0]}>
        <RowHead>{i + 2}</RowHead>
        {COLS.map(([c, w], j) => (
          <Cell key={c} $w={w} $align={j === 0 ? 'center' : j > 1 ? 'right' : 'left'}>{r[j]}</Cell>
        ))}
      </Row>
    ))}
  </Grid>
);

export default function App() {
  return (
    <Page>
      <Global />
      <TitleRibbon />
      <Tabs />
      <RibbonPanel />
      <FormulaRow>
        <NameBox>E1<FormDown /></NameBox>
        <Dots><VDots /></Dots>
        <FxButtons><XIcon /><TickIcon /><FxIcon /></FxButtons>
        <FormulaInput>Amount<FormDown /></FormulaInput>
      </FormulaRow>
      <Main>
        <SidePane>
          <SideDash />
          <SideIcon><SideTabs /></SideIcon>
          <SideIcon><SideGreen /></SideIcon>
          <SideIcon><SideStack /></SideIcon>
          <SideIcon><SideCols /></SideIcon>
          <SideIcon><SideBinoc /></SideIcon>
          <GreenTab><PaneArrow /></GreenTab>
          <Gear><GearIcon /></Gear>
        </SidePane>
        <SheetArea>
          <SheetTop>
            <Sheet />
            <VBar>
              <VArrow><ArrowUp /></VArrow>
              <VThumb />
              <VFill />
              <VArrow><ArrowDown /></VArrow>
            </VBar>
          </SheetTop>
          <TabsRow>
            <SheetNav><NavLeft /><NavRight c="#aaa" /></SheetNav>
            <SheetTab>Sheet2</SheetTab>
            <AddSheet><AddIcon /></AddSheet>
            <TabGrip><VDots /></TabGrip>
            <HBar>
              <HArrow><NavLeft c="#666" /></HArrow>
              <HThumb />
              <HArrow $end><NavRight c="#888" /></HArrow>
            </HBar>
          </TabsRow>
        </SheetArea>
        <FillHandle />
        <FilterMenu />
        <Spot />
        <Pointer><CursorIcon /></Pointer>
        <Watermark>
          <WatermarkLink>https://www.extendoffice.com</WatermarkLink>
          Professional Office Add-ins
        </Watermark>
      </Main>
      <StatusBar>
        Ready
        <MacroIcon><MacroBtn /></MacroIcon>
        <ViewGroup>
          <ViewBtn $on><NormalView /></ViewBtn>
          <ViewBtn><LayoutView /></ViewBtn>
          <ViewBtn><BreakView /></ViewBtn>
          <Zoom>
            <Minus />
            <ZoomTrack><ZoomThumb /></ZoomTrack>
            <Plus />
          </Zoom>
          <ZoomValue>100%</ZoomValue>
        </ViewGroup>
      </StatusBar>
    </Page>
  );
}
